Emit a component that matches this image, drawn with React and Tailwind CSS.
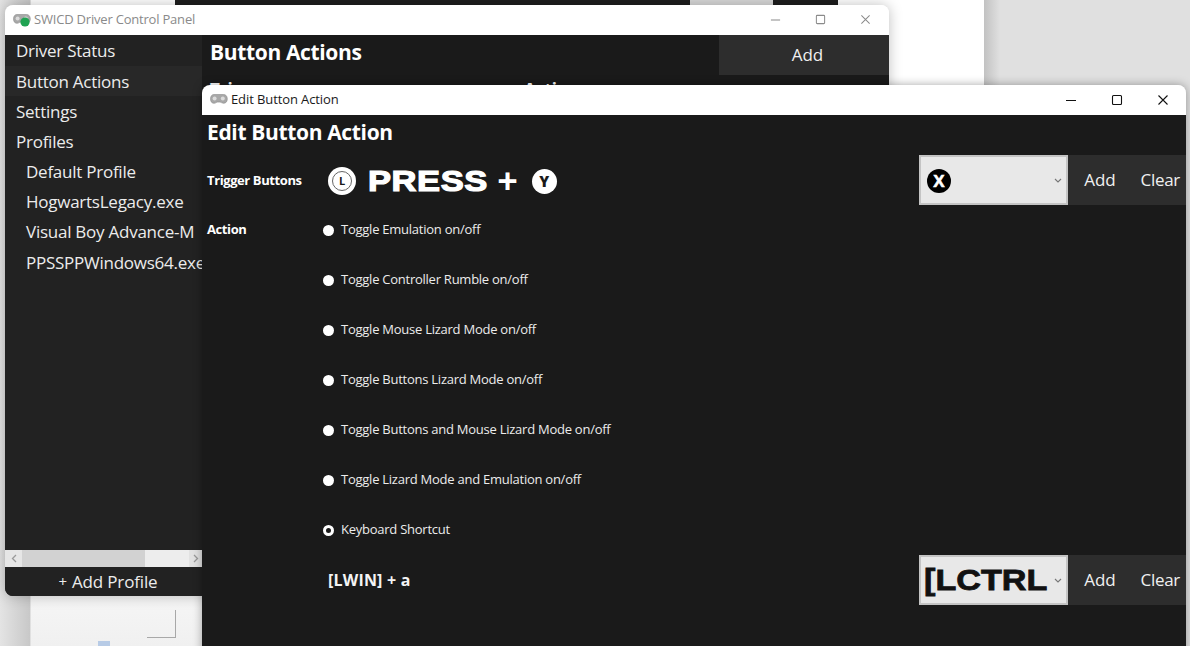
const font = "font-['Open_Sans','Noto_Sans',sans-serif]";

const GamepadIcon = ({ dot }) => (
  <svg width="18" height="14" viewBox="0 0 18 14" className="shrink-0">
    <path d="M4 1.500h9.500c2.200 0 3.800 1.600 3.800 4.400s-1.600 4.400-3.800 4.400c-1.600 0-2.400-1.200-3.400-1.200H7.500c-1 0-1.800 1.200-3.500 1.200C1.900 10.300.5 8.700.5 5.900S1.900 1.500 4 1.500z" fill="#a8a8a8" stroke="#8c8c8c" strokeWidth=".6" />
    <circle cx="4.600" cy="5.600" r="2" fill="#dcdcdc" />
    <circle cx="12.800" cy="5.600" r="2" fill="#dcdcdc" />
    {dot && <circle cx="12" cy="9" r="4.600" fill="#1fa352" />}
  </svg>
);

const WindowButtons = ({ color, gap, size }) => (
  <div className={`flex items-center ${gap}`}>
    <svg width={size} height={size} viewBox="0 0 12 12"><path d="M1 6.500h10" stroke={color} strokeWidth="1.100" /></svg>
    <svg width={size} height={size} viewBox="0 0 12 12"><rect x="1.500" y="1.500" width="9" height="9" rx="1" fill="none" stroke={color} strokeWidth="1.100" /></svg>
    <svg width={size} height={size} viewBox="0 0 12 12"><path d="M1.500 1.500l9 9M10.500 1.500l-9 9" stroke={color} strokeWidth="1.100" /></svg>
  </div>
);

const Chevron = () => (
  <svg width="8" height="5" viewBox="0 0 8 5" className="shrink-0"><path d="M1 1l3 3 3-3" fill="none" stroke="#777" strokeWidth="1.100" /></svg>
);

const navItems = ["Driver Status", "Button Actions", "Settings", "Profiles"];
const profiles = ["Default Profile", "HogwartsLegacy.exe", "Visual Boy Advance-M", "PPSSPPWindows64.exe"];
const actions = [
  "Toggle Emulation on/off",
  "Toggle Controller Rumble on/off",
  "Toggle Mouse Lizard Mode on/off",
  "Toggle Buttons Lizard Mode on/off",
  "Toggle Buttons and Mouse Lizard Mode on/off",
  "Toggle Lizard Mode and Emulation on/off",
];

const Radio = ({ label, checked, first }) => (
  <div className="flex h-[50px] pt-[14px]">
    <div className="w-[116px] shrink-0 text-[13px] font-bold leading-[20px] tracking-[-0.4px] text-white">{first ? "Action" : ""}</div>
    <div className="mt-[1px] flex h-5 items-center">
      <span className={`h-[11px] w-[11px] rounded-full ${checked ? "border-[3px] border-white bg-[#1a1a1a]" : "bg-white"}`} />
      <span className="ml-[7px] text-[13px] tracking-[-0.25px] text-[#ececec]">{label}</span>
    </div>
  </div>
);

const Controls = ({ children }) => (
  <div className="ml-auto flex h-[50px]">
    <div className="flex w-[149px] items-center justify-between overflow-hidden border-2 border-[#c4c4c4] bg-[#e8e8e8] pl-[6px] pr-[4px]">
      {children}
      <Chevron />
    </div>
    <div className="flex w-[118px] items-center bg-[#2d2d2d] text-[17px] text-[#f0f0f0]">
      <span className="w-[64px] text-center">Add</span>
      <span className="w-[48px] text-right tracking-[-0.3px]">Clear</span>
    </div>
  </div>
);

export default function App() {
  return (
    <div className={`relative h-[646px] w-[1190px] overflow-hidden bg-[#e0e0e0] ${font}`}>

      {/* DESKTOP BEHIND */}

      <div className="absolute left-0 top-0 h-full w-[30px] bg-gradient-to-r from-[#e4e4e4] to-[#c8c8c8]" />
      <div className="absolute left-[984px] top-0 h-[85px] w-[16px] bg-gradient-to-r from-[#c2c2c2] to-[#e0e0e0]" />
      <div className="absolute left-[31px] top-0 h-full w-[953px] bg-gradient-to-b from-white from-80% to-[#f0f0f0]" />
      <div className="absolute left-[175px] top-0 h-[5px] w-[663px] bg-[#1e1e1e]" />
      <div className="absolute left-[690px] top-0 h-[5px] w-[83px] bg-[#d8d8d8]" />
      <div className="absolute left-[147px] top-[610px] h-[28px] w-[29px] border-b border-r border-[#a8a8a8]" />
      <div className="absolute left-[98px] top-[641px] h-[5px] w-[12px] bg-[#b7cbe6]" />

      {/* MAIN WINDOW */}

      <div className="absolute left-[5px] top-[5px] flex h-[591px] w-[884px] flex-col overflow-hidden rounded-[8px] shadow-[0_0_14px_rgba(0,0,0,0.25)]">

        <div className="flex h-[30px] shrink-0 items-center bg-white pl-[8px] pr-[18px]">
          <GamepadIcon dot />
          <span className="ml-[3px] text-[13px] tracking-[-0.2px] text-[#8a8a8a]">SWICD Driver Control Panel</span>
          <div className="ml-auto -translate-y-[1px]">
            <WindowButtons color="#8a8a8a" gap="gap-[34px]" size={11} />
          </div>
        </div>

        <div className="flex flex-1 bg-[#1a1a1a]">

          <div className="flex w-[197px] shrink-0 flex-col bg-[#222222]">
            <div className="flex-1 pt-[1px] text-[17px] tracking-[-0.25px] text-[#ececec]">
              {navItems.map((item) => (
                <div key={item} className={`flex h-[30.2px] items-center pl-[11px] ${item === "Button Actions" ? "bg-[#282828]" : ""}`}>
                  {item}
                </div>
              ))}
              {profiles.map((item) => (
                <div key={item} className="flex h-[30.2px] items-center whitespace-nowrap pl-[21px]">
                  {item}
                </div>
              ))}
            </div>

            <div className="flex h-[17px] items-stretch bg-[#d2d2d2]">
              <div className="flex w-[17px] items-center justify-center bg-[#e6e6e6] text-[#9a9a9a]">
                <svg width="6" height="9" viewBox="0 0 6 9"><path d="M5 1L1.500 4.500 5 8" fill="none" stroke="currentColor" strokeWidth="1.300" /></svg>
              </div>
              <div className="flex-1" />
              <div className="w-[44px] bg-[#ededed]" />
              <div className="flex w-[13px] items-center justify-center bg-[#e2e2e2] text-[#9a9a9a]">
                <svg width="6" height="9" viewBox="0 0 6 9"><path d="M1 1l3.500 3.500L1 8" fill="none" stroke="currentColor" strokeWidth="1.300" /></svg>
              </div>
            </div>

            <div className="flex h-[29px] items-center justify-center pl-[9px] text-[17px] tracking-[-0.15px] text-[#ececec]">
              <span className="mr-[5px] text-[15px]">+</span> Add Profile
            </div>
          </div>

          <div className="flex-1">
            <div className="flex h-[40px]">
              <h1 className="pl-[8px] text-[21px] font-bold leading-[34px] tracking-[-0.35px] text-white">Button Actions</h1>
              <div className="ml-auto flex w-[170px] items-center justify-center bg-[#2d2d2d] pl-[7px] text-[17px] text-[#f0f0f0]">Add</div>
            </div>
            <div className="flex pl-[8px] pt-[2px] text-[17px] font-bold text-white">
              <span className="w-[314px]">Trigger</span>
              <span>Action</span>
            </div>
          </div>

        </div>
      </div>

      {/* EDIT DIALOG */}

      <div className="absolute left-[202px] top-[85px] flex h-[600px] w-[984px] flex-col overflow-hidden rounded-t-[8px] shadow-[0_0_10px_rgba(0,0,0,0.35)]">

        <div className="flex h-[30px] shrink-0 items-center bg-white pl-[8px] pr-[17px]">
          <GamepadIcon />
          <span className="ml-[3px] text-[13px] tracking-[-0.1px] text-[#1a1a1a]">Edit Button Action</span>
          <div className="ml-auto">
            <WindowButtons color="#111111" gap="gap-[34px]" size={12} />
          </div>
        </div>

        <div className="flex-1 bg-[#1a1a1a] pl-[5px]">

          <h2 className="h-[40px] pt-[2px] text-[21px] font-bold leading-[30px] tracking-[-0.35px] text-white">Edit Button Action</h2>

          <div className="flex h-[50px] items-center">
            <div className="w-[121px] shrink-0 pt-[2px] text-[13px] font-bold tracking-[-0.4px] text-white">Trigger Buttons</div>
            <div className="flex items-center pt-[2px]">
              <div className="flex h-[28px] w-[28px] items-center justify-center rounded-full bg-white">
                <div className="flex h-[20px] w-[20px] items-center justify-center rounded-full border-[1.500px] border-[#666666] text-[11px] font-bold text-[#1a1a1a]">L</div>
              </div>
              <span className="ml-[12px] origin-left scale-x-[1.15] font-['Liberation_Sans',sans-serif] text-[30px] font-black leading-none tracking-[0.5px] text-white [-webkit-text-stroke:1.200px_white]">PRESS</span>
              <span className="ml-[25px] text-[36px] font-bold leading-none text-white">+</span>
              <div className="ml-[14px] flex h-[25px] w-[25px] items-center justify-center rounded-full bg-white text-[15px] font-extrabold text-[#1a1a1a]">Y</div>
            </div>
            <Controls>
              <div className="mt-[2px] flex h-[24px] w-[24px] items-center justify-center rounded-full bg-black font-['Liberation_Sans',sans-serif] text-[17px] font-bold leading-none text-white [-webkit-text-stroke:0.600px_white]">X</div>
            </Controls>
          </div>

          {actions.map((label, index) => (
            <Radio key={label} label={label} first={index === 0} />
          ))}
          <Radio label="Keyboard Shortcut" checked />

          <div className="flex h-[50px] items-center">
            <div className="w-[121px] shrink-0" />
            <span className="text-[16px] font-bold tracking-[0.2px] text-[#f4f4f4]">[LWIN] + a</span>
            <Controls>
              <span className="-ml-[3px] origin-left scale-x-[1.14] whitespace-nowrap font-['Liberation_Sans',sans-serif] text-[30px] font-black leading-none text-[#111] [-webkit-text-stroke:0.800px_#111]">[LCTRL</span>
            </Controls>
          </div>

        </div>
      </div>

    </div>
  );
}
